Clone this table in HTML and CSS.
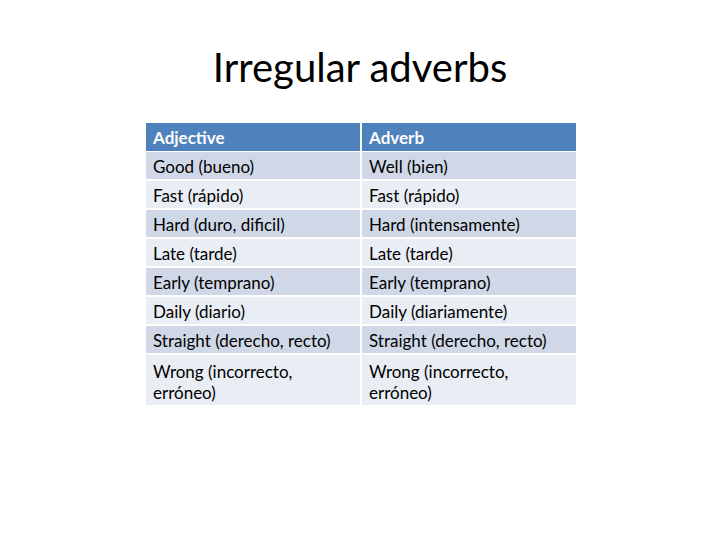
FILE: index.html
```html
<!DOCTYPE html>
<html>
<head>
<meta charset="utf-8">
<link rel="stylesheet" href="styles.css">
</head>
<body>
<div class="slide">
  <h1 class="title">Irregular adverbs</h1>
  <div class="table">
    <div class="cell head">Adjective</div><div class="cell head">Adverb</div>
    <div class="cell odd">Good (bueno)</div><div class="cell odd">Well (bien)</div>
    <div class="cell even">Fast (rápido)</div><div class="cell even">Fast (rápido)</div>
    <div class="cell odd">Hard (duro, dificil)</div><div class="cell odd">Hard (intensamente)</div>
    <div class="cell even">Late (tarde)</div><div class="cell even">Late (tarde)</div>
    <div class="cell odd">Early (temprano)</div><div class="cell odd">Early (temprano)</div>
    <div class="cell even">Daily (diario)</div><div class="cell even">Daily (diariamente)</div>
    <div class="cell odd">Straight (derecho, recto)</div><div class="cell odd">Straight (derecho, recto)</div>
    <div class="cell even tall">Wrong (incorrecto, erróneo)</div><div class="cell even tall">Wrong (incorrecto, erróneo)</div>
  </div>
</div>
</body>
</html>
```
FILE: styles.css
```css
html, body {
  margin: 0;
  padding: 0;
  background: #ffffff;
}
.slide {
  width: 720px;
  height: 540px;
  font-family: "Lato", "Open Sans", sans-serif;
  color: #000;
  padding-top: 43px;
  box-sizing: border-box;
}
.title {
  margin: 0;
  text-align: center;
  font-weight: 400;
  font-size: 40px;
  line-height: 48px;
  height: 80px;
}
.table {
  margin-left: 146px;
  width: 430px;
  display: grid;
  grid-template-columns: 214px 214px;
  grid-auto-rows: 27px;
  gap: 2px;
}
.cell {
  font-size: 17px;
  line-height: 21px;
  padding: 4px 7px 2px;
  box-sizing: border-box;
}
.head {
  background: #4f81bd;
  color: #fff;
  font-weight: 700;
  height: 28px;
}
.odd { background: #d0d8e8; }
.even { background: #e9edf4; }
.tall {
  height: 50px;
  padding-top: 6px;
}
```
